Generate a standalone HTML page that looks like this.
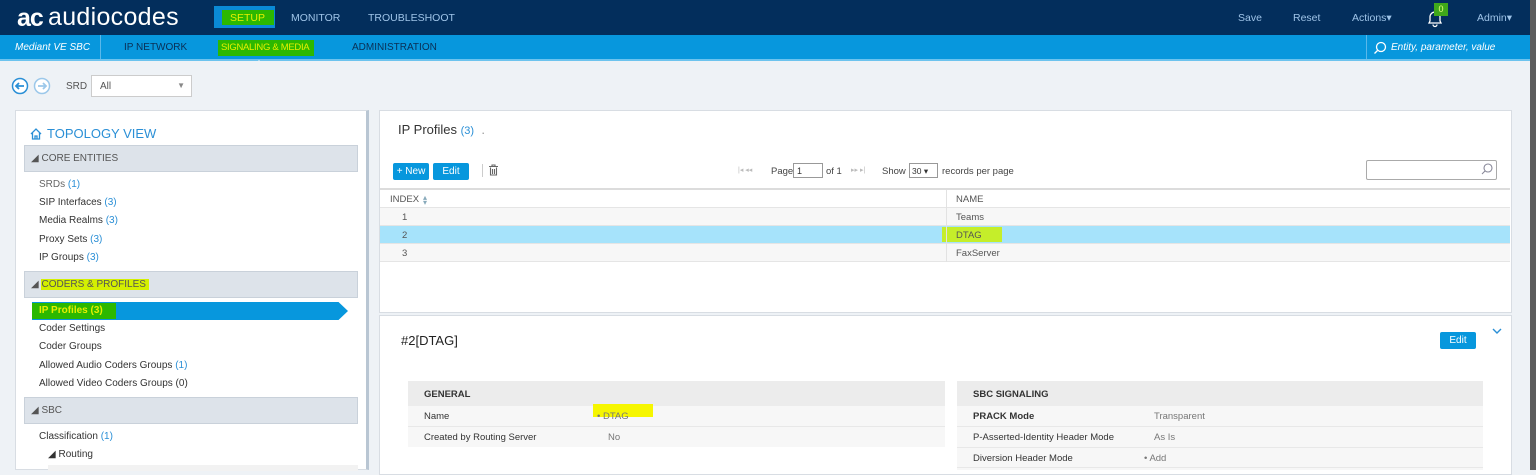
<!DOCTYPE html>
<html><head><meta charset="utf-8"><style>
*{box-sizing:border-box;margin:0;padding:0}
body{width:1536px;height:470px;overflow:hidden;background:#eef2f6;font-family:"Liberation Sans",sans-serif;font-size:10px;color:#333;position:relative}
.abs{position:absolute}
.top{left:0;top:0;width:1530px;height:35px;background:#032e5c}
.sub{left:0;top:35px;width:1530px;height:26px;background:#0797dd;border-bottom:2px solid #6cc3ee}
.nav{color:#9fc4e8;font-size:10.5px}
.subt{color:#0a2f55;font-size:10px}
.hl{background:#d4f000}
.hlg{background:#2cb800}
.lp{left:15px;top:110px;width:354px;height:360px;background:#fff;border:1px solid #d8dde3;border-right:3px solid #b9c6d3}
.sec{left:8px;width:334px;height:27px;background:#dde3ea;border:1px solid #c9d1da;color:#555;font-size:10px;padding:7px 0 0 6px}
.item{left:23px;font-size:10px;color:#333}
.b{color:#2a8fd6}
.rp{left:379px;width:1133px;background:#fff;border:1px solid #d8dde3}
.btn{background:#0797dd;color:#fff;border-radius:2px;text-align:center;font-size:10px}
.row{left:380px;width:1130px;height:18px;border-bottom:1px solid #e5e5e5;font-size:9.5px;color:#555}
.row span{position:absolute;top:4px}
.th{background:#ececec}
.kv{font-size:9.5px;color:#333}
</style></head><body>
<div class="abs top"></div>
<div class="abs" style="left:17px;top:4px;font-size:25px;color:#fff;font-weight:bold;letter-spacing:-1px">ac</div>
<div class="abs" style="left:48px;top:3px;font-size:25px;color:#fff;letter-spacing:0.3px">audiocodes</div>
<div class="abs" style="left:214px;top:6px;width:61px;height:22px;background:#0a8ad6"></div>
<div class="abs hlg" style="left:222px;top:10px;width:52px;height:15px"></div>
<div class="abs" style="left:230px;top:12px;font-size:10.5px;color:#e6ef00">SETUP</div>
<div class="abs nav" style="left:291px;top:12px">MONITOR</div>
<div class="abs nav" style="left:368px;top:12px">TROUBLESHOOT</div>
<div class="abs nav" style="left:1238px;top:12px">Save</div>
<div class="abs nav" style="left:1293px;top:12px">Reset</div>
<div class="abs nav" style="left:1352px;top:12px">Actions▾</div>
<svg class="abs" style="left:1426px;top:8px" width="18" height="20" viewBox="0 0 18 20"><path d="M3 15 L4 13 V9 A5 5 0 0 1 14 9 V13 L15 15 Z M7 16.5 A2 2 0 0 0 11 16.5" fill="none" stroke="#fff" stroke-width="1.3"/></svg>
<div class="abs" style="left:1434px;top:3px;width:14px;height:13px;background:#3fa81a;color:#e5ff7a;font-size:9px;text-align:center;line-height:13px">0</div>
<div class="abs nav" style="left:1477px;top:12px">Admin▾</div>
<div class="abs" style="left:1530px;top:0;width:6px;height:470px;background:#5c5c5c"></div>
<div class="abs" style="left:1512px;top:61px;width:18px;height:409px;background:#eef2f6"></div>
<div class="abs sub"></div>
<div class="abs" style="left:15px;top:42px;color:#fff;font-style:italic;font-size:10px">Mediant VE SBC</div>
<div class="abs" style="left:100px;top:35px;width:1px;height:24px;background:#5ab8ea"></div>
<div class="abs subt" style="left:124px;top:42px">IP NETWORK</div>
<div class="abs hlg" style="left:218px;top:40px;width:96px;height:16px"></div>
<div class="abs" style="left:221px;top:42px;font-size:9.5px;color:#e6ef00;letter-spacing:-0.3px">SIGNALING &amp; MEDIA</div>
<div class="abs" style="left:254px;top:55px;width:0;height:0;border:5px solid transparent;border-bottom-color:#eef2f6"></div>
<div class="abs subt" style="left:352px;top:42px">ADMINISTRATION</div>
<div class="abs" style="left:1366px;top:35px;width:1px;height:24px;background:#5ab8ea"></div>
<svg class="abs" style="left:1373px;top:41px" width="14" height="14"><circle cx="8" cy="6" r="4.5" fill="none" stroke="#fff" stroke-width="1.3"/><path d="M4.5 9.5 L1.5 12.5" stroke="#fff" stroke-width="1.3"/></svg>
<div class="abs" style="left:1391px;top:42px;color:#fff;font-style:italic;font-size:10px">Entity, parameter, value</div>

<svg class="abs" style="left:11px;top:77px" width="40" height="18"><circle cx="9" cy="9" r="7.5" fill="#fff" stroke="#2a8fd6" stroke-width="1.5"/><path d="M5 9h8M8 6l-3 3 3 3" stroke="#2a8fd6" stroke-width="1.8" fill="none"/><circle cx="31" cy="9" r="7.5" fill="#fff" stroke="#9cc8ea" stroke-width="1.5"/><path d="M27 9h8M32 6l3 3-3 3" stroke="#9cc8ea" stroke-width="1.8" fill="none"/></svg>
<div class="abs" style="left:66px;top:81px;color:#555">SRD</div>
<div class="abs" style="left:91px;top:75px;width:101px;height:22px;background:#fff;border:1px solid #ccc;color:#555;padding:5px 8px">All<span style="position:absolute;right:6px;top:5px;color:#888;font-size:8px">▼</span></div>

<div class="abs lp">
<svg class="abs" style="left:13px;top:16px" width="14" height="14"><path d="M2 7 L7 2 L12 7 M3.5 6 V12 H10.5 V6 M6 12 V9 H8 V12" fill="none" stroke="#2a8fd6" stroke-width="1.3"/></svg>
<div class="abs" style="left:31px;top:15px;font-size:13px;color:#2a8fd6">TOPOLOGY VIEW</div>
<div class="abs sec" style="top:34px">◢ CORE ENTITIES</div>
<div class="abs item" style="top:68px;color:#666">SRDs <span class="b">(1)</span></div>
<div class="abs item" style="top:86px">SIP Interfaces <span class="b">(3)</span></div>
<div class="abs item" style="top:104px">Media Realms <span class="b">(3)</span></div>
<div class="abs item" style="top:123px">Proxy Sets <span class="b">(3)</span></div>
<div class="abs item" style="top:141px">IP Groups <span class="b">(3)</span></div>
<div class="abs sec" style="top:160px">◢ <span class="hl">CODERS &amp; PROFILES&nbsp;</span></div>
<div class="abs" style="left:16px;top:191px;width:316px;height:18px;background:#0797dd;clip-path:polygon(0 0,97% 0,100% 50%,97% 100%,0 100%)"></div>
<div class="abs hlg" style="left:16px;top:192px;width:84px;height:16px"></div>
<div class="abs item" style="top:194px;color:#e6ef00;font-weight:bold">IP Profiles (3)</div>
<div class="abs item" style="top:212px">Coder Settings</div>
<div class="abs item" style="top:230px">Coder Groups</div>
<div class="abs item" style="top:249px">Allowed Audio Coders Groups <span class="b">(1)</span></div>
<div class="abs item" style="top:267px">Allowed Video Coders Groups (0)</div>
<div class="abs sec" style="top:286px">◢ SBC</div>
<div class="abs item" style="top:320px">Classification <span class="b">(1)</span></div>
<div class="abs item" style="top:338px;left:32px">◢ Routing</div>
<div class="abs" style="left:32px;top:354px;width:310px;height:6px;background:#f2f2f2"></div>
</div>

<div class="abs rp" style="top:110px;height:203px"></div>
<div class="abs" style="left:398px;top:122px;font-size:13px;color:#333">IP Profiles <span class="b" style="font-size:11px">(3)</span> <span style="color:#999">&nbsp;.</span></div>
<div class="abs btn" style="left:393px;top:163px;width:36px;height:17px;line-height:17px">+ New</div>
<div class="abs btn" style="left:433px;top:163px;width:36px;height:17px;line-height:17px">Edit</div>
<div class="abs" style="left:482px;top:164px;width:1px;height:13px;background:#ccc"></div>
<svg class="abs" style="left:488px;top:164px" width="11" height="12"><path d="M1 2.5h9M4 2.5V1h3v1.5M2.5 3.5v7.5h6v-7.5M4.5 5v5M6.5 5v5" fill="none" stroke="#666" stroke-width="1.1"/></svg>
<div class="abs" style="left:738px;top:166px;color:#bbb;font-size:7px">|◂ ◂◂</div>
<div class="abs" style="left:771px;top:166px;color:#444;font-size:9.5px">Page</div>
<div class="abs" style="left:793px;top:163px;width:30px;height:15px;border:1px solid #999;font-size:9px;padding:2px 3px">1</div>
<div class="abs" style="left:826px;top:166px;color:#444;font-size:9.5px">of 1</div>
<div class="abs" style="left:851px;top:166px;color:#bbb;font-size:7px">▸▸ ▸|</div>
<div class="abs" style="left:882px;top:166px;color:#444;font-size:9.5px">Show</div>
<div class="abs" style="left:909px;top:163px;width:29px;height:15px;border:1px solid #999;font-size:8.5px;padding:2px 2px">30 ▾</div>
<div class="abs" style="left:942px;top:166px;color:#444;font-size:9.5px">records per page</div>
<div class="abs" style="left:1366px;top:160px;width:131px;height:20px;border:1px solid #aaa;border-radius:2px"></div>
<svg class="abs" style="left:1480px;top:162px" width="14" height="14"><circle cx="8" cy="6" r="4" fill="none" stroke="#889" stroke-width="1.1"/><path d="M5 9 L2 12" stroke="#889" stroke-width="1.1"/></svg>
<div class="abs" style="left:380px;top:188px;width:1130px;height:2px;background:#dcdcdc"></div>
<div class="abs row" style="top:190px;background:#fff"><span style="left:10px">INDEX</span><span style="left:43px;top:3px;color:#8ab;font-size:8px">▴<br></span><span style="left:43px;top:8px;color:#8ab;font-size:8px">▾</span><span style="left:576px">NAME</span></div>
<div class="abs row" style="top:208px;background:#f7f7f7"><span style="left:22px">1</span><span style="left:576px">Teams</span></div>
<div class="abs row" style="top:226px;background:#a6e3fb"><span style="left:22px">2</span><span style="left:562px;top:1px;width:60px;height:15px;background:#c5ee2a"></span><span style="left:576px">DTAG</span></div>
<div class="abs row" style="top:244px;background:#f7f7f7"><span style="left:22px">3</span><span style="left:576px">FaxServer</span></div>
<div class="abs" style="left:946px;top:190px;width:1px;height:72px;background:#e2e2e2"></div>

<div class="abs rp" style="top:315px;height:160px"></div>
<div class="abs" style="left:401px;top:333px;font-size:13px;color:#222">#2[DTAG]</div>
<div class="abs btn" style="left:1440px;top:332px;width:36px;height:17px;line-height:17px">Edit</div>
<svg class="abs" style="left:1492px;top:327px" width="10" height="8"><path d="M1 2l4 4 4-4" fill="none" stroke="#2a8fd6" stroke-width="1.4"/></svg>

<div class="abs th" style="left:408px;top:381px;width:537px;height:25px"></div>
<div class="abs kv" style="left:424px;top:389px;font-weight:bold">GENERAL</div>
<div class="abs" style="left:408px;top:406px;width:537px;height:41px;background:#f7f7f7"></div>
<div class="abs" style="left:408px;top:426px;width:537px;height:1px;background:#e8e8e8"></div>
<div class="abs" style="left:593px;top:404px;width:60px;height:13px;background:#f6f600"></div>
<div class="abs kv" style="left:424px;top:411px">Name</div>
<div class="abs kv" style="left:597px;top:411px;color:#777">• DTAG</div>
<div class="abs kv" style="left:424px;top:432px">Created by Routing Server</div>
<div class="abs kv" style="left:608px;top:432px;color:#777">No</div>

<div class="abs th" style="left:957px;top:381px;width:526px;height:25px"></div>
<div class="abs kv" style="left:973px;top:389px;font-weight:bold">SBC SIGNALING</div>
<div class="abs" style="left:957px;top:406px;width:526px;height:64px;background:#f7f7f7"></div>
<div class="abs" style="left:957px;top:426px;width:526px;height:1px;background:#e8e8e8"></div>
<div class="abs" style="left:957px;top:447px;width:526px;height:1px;background:#e8e8e8"></div>
<div class="abs" style="left:957px;top:467px;width:526px;height:1px;background:#e8e8e8"></div>
<div class="abs kv" style="left:973px;top:411px;font-weight:bold">PRACK Mode</div>
<div class="abs kv" style="left:1154px;top:411px;color:#777">Transparent</div>
<div class="abs kv" style="left:973px;top:432px">P-Asserted-Identity Header Mode</div>
<div class="abs kv" style="left:1154px;top:432px;color:#777">As Is</div>
<div class="abs kv" style="left:973px;top:453px">Diversion Header Mode</div>
<div class="abs kv" style="left:1144px;top:453px;color:#777">• Add</div>
</body></html>
